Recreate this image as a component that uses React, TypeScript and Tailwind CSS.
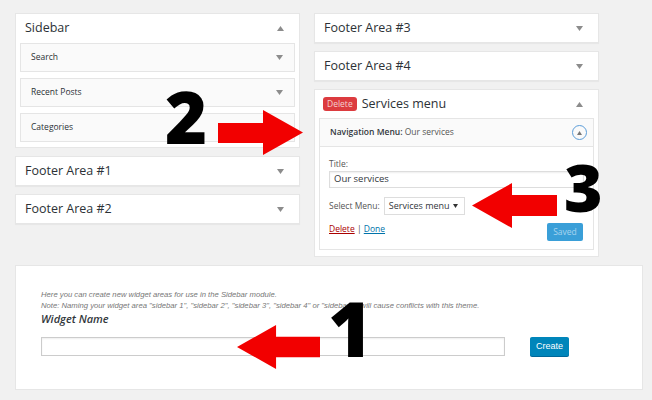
const OPEN = "font-['Open_Sans',sans-serif]";

function Tri({ up = false }: { up?: boolean }) {
  return (
    <svg width="7" height="5" viewBox="0 0 7 5" className="shrink-0">
      {up ? <polygon points="0,5 7,5 3.5,0" fill="#8c8c8c" /> : <polygon points="0,0 7,0 3.5,5" fill="#8c8c8c" />}
    </svg>
  );
}

function AreaHead({ title, up = false, h = "h-[28px]" }: { title: string; up?: boolean; h?: string }) {
  return (
    <div className={`flex ${h} items-center justify-between pl-[9px] pr-[15px]`}>
      <span className={`${OPEN} text-[12.5px] font-medium text-[#2c3136]`}>{title}</span>
      <Tri up={up} />
    </div>
  );
}

function Closed({ title }: { title: string }) {
  return (
    <div className="bg-white border border-[#e6e6e6] shadow-[0_1px_1px_rgba(0,0,0,0.04)]">
      <AreaHead title={title} />
    </div>
  );
}

function WidgetRow({ title }: { title: string }) {
  return (
    <div className="flex h-[29px] items-center justify-between border border-[#e5e5e5] bg-[#fafafa] pl-[10px] pr-[11px]">
      <span className={`${OPEN} text-[8.5px] font-medium text-[#2c3136]`}>{title}</span>
      <Tri />
    </div>
  );
}

function Arrow({ dir, className }: { dir: "left" | "right"; className: string }) {
  return (
    <svg viewBox="0 0 85 45" preserveAspectRatio="none" className={`absolute ${className}`}>
      {dir === "right" ? (
        <polygon points="0,13 45,13 45,0 85,22.5 45,45 45,33 0,33" fill="#f20000" />
      ) : (
        <polygon points="85,12 40,12 40,0 0,22.5 40,45 40,33 85,33" fill="#f20000" />
      )}
    </svg>
  );
}

export default function App() {
  return (
    <div className="relative h-[400px] w-[652px] overflow-hidden bg-[#f1f1f1] pt-[13px]">
      <div className="flex gap-[14px] pl-[15px]">
        {/* Left column */}
        <div className="flex w-[285px] flex-col gap-[8px]">
          <div className="bg-white border border-[#e6e6e6] pb-[5px]">
            <AreaHead title="Sidebar" up h="h-[29px]" />
            <div className="flex flex-col gap-[6px] px-[4px]">
              <WidgetRow title="Search" />
              <WidgetRow title="Recent Posts" />
              <WidgetRow title="Categories" />
            </div>
          </div>
          <Closed title="Footer Area #1" />
          <Closed title="Footer Area #2" />
        </div>

        {/* Right column */}
        <div className="flex w-[285px] flex-col gap-[8px]">
          <Closed title="Footer Area #3" />
          <Closed title="Footer Area #4" />
          <div className="bg-white border border-[#e6e6e6] pb-[6px]">
            <div className="flex h-[28px] items-center justify-between pl-[8px] pr-[15px]">
              <div className="flex items-center gap-[5px]">
                <span className={`${OPEN} rounded-[3px] bg-[#dc3b3f] px-[4px] py-[1px] text-[8.5px] text-[#f5d0d0]`}>Delete</span>
                <span className={`${OPEN} text-[12.5px] font-medium text-[#2c3136]`}>Services menu</span>
              </div>
              <Tri up />
            </div>
            <div className="mx-[4px] border border-[#e5e5e5]">
              <div className="flex h-[28px] items-center justify-between border-b border-[#e5e5e5] bg-[#fafafa] pl-[10px] pr-[6px]">
                <span className={`${OPEN} text-[8.5px] text-[#555]`}>
                  <span className="font-semibold text-[#32373c]">Navigation Menu:</span> Our services
                </span>
                <span className="flex h-[15px] w-[15px] items-center justify-center rounded-full border border-[#5b9dd9]">
                  <svg width="5" height="4" viewBox="0 0 5 4"><polygon points="0,4 5,4 2.5,0" fill="#777" /></svg>
                </span>
              </div>
              <div className={`${OPEN} px-[9px] pb-[8px] pt-[11px] text-[8.5px] text-[#555]`}>
                <div className="leading-[12px]">Title:</div>
                <div className="mt-[1px] flex h-[17px] items-center border border-[#ddd] pl-[4px] text-[9.5px] text-[#32373c] shadow-[inset_0_1px_2px_rgba(0,0,0,0.07)]">
                  Our services
                </div>
                <div className="mt-[9px] flex items-center gap-[4px]">
                  <span className="whitespace-nowrap">Select Menu:</span>
                  <span className="flex h-[18px] w-[81px] items-center justify-between whitespace-nowrap border border-[#ddd] pl-[4px] pr-[6px] text-[9px] text-[#32373c]">
                    Services menu
                    <svg width="5" height="4" viewBox="0 0 5 4"><polygon points="0,0 5,0 2.5,4" fill="#333" /></svg>
                  </span>
                </div>
                <div className="mt-[8px] flex items-start justify-between">
                  <span className="leading-[12px]">
                    <span className="text-[#a00] underline">Delete</span> | <span className="text-[#0073aa] underline">Done</span>
                  </span>
                  <span className="mr-[1px] flex h-[18px] w-[36px] items-center justify-center rounded-[2px] bg-[#3a9fd8] text-[8.5px] text-[#a8d4ee]">Saved</span>
                </div>
              </div>
            </div>
          </div>
        </div>
      </div>

      {/* Bottom panel */}
      <div className="ml-[15px] mt-[8px] h-[125px] w-[628px] bg-white border border-[#e6e6e6] pl-[25px] pt-[23px]">
        <p className="font-['Liberation_Sans',sans-serif] text-[7.7px] italic leading-[11px] text-[#777]">
          Here you can create new widget areas for use in the Sidebar module.
        </p>
        <p className="font-['Liberation_Sans',sans-serif] text-[7.7px] italic leading-[11px] text-[#777]">
          Note: Naming your widget area "sidebar 1", "sidebar 2", "sidebar 3", "sidebar 4" or "sidebar 5" will cause conflicts with this theme.
        </p>
        <p className={`${OPEN} text-[11px] font-semibold italic leading-[16px] text-[#32373c]`}>Widget Name</p>
        <div className="mt-[10px] flex items-center">
          <div className="h-[19px] w-[464px] border border-[#ccc] bg-white shadow-[inset_0_1px_2px_rgba(0,0,0,0.07)]" />
          <span className="ml-[25px] flex h-[19px] w-[39px] items-center justify-center rounded-[2px] bg-[#0085ba] font-['Liberation_Sans',sans-serif] text-[9px] text-white shadow-[0_1px_0_#006799]">
            Create
          </span>
        </div>
      </div>

      {/* Annotations */}
      <span className={`${OPEN} absolute left-[165px] top-[80px] text-[72px] font-extrabold leading-none text-black`}>2</span>
      <Arrow dir="right" className="left-[218px] top-[110px] h-[45px] w-[85px]" />
      <span className={`${OPEN} absolute left-[564px] top-[162px] text-[66px] font-extrabold leading-[48px] text-black`}>3</span>
      <Arrow dir="left" className="left-[472px] top-[183px] h-[45px] w-[85px]" />
      <span className={`${OPEN} absolute left-[328px] top-[300px] text-[76px] font-extrabold leading-[56px] text-black`}>1</span>
      <Arrow dir="left" className="left-[237px] top-[325px] h-[44px] w-[83px]" />
    </div>
  );
}
